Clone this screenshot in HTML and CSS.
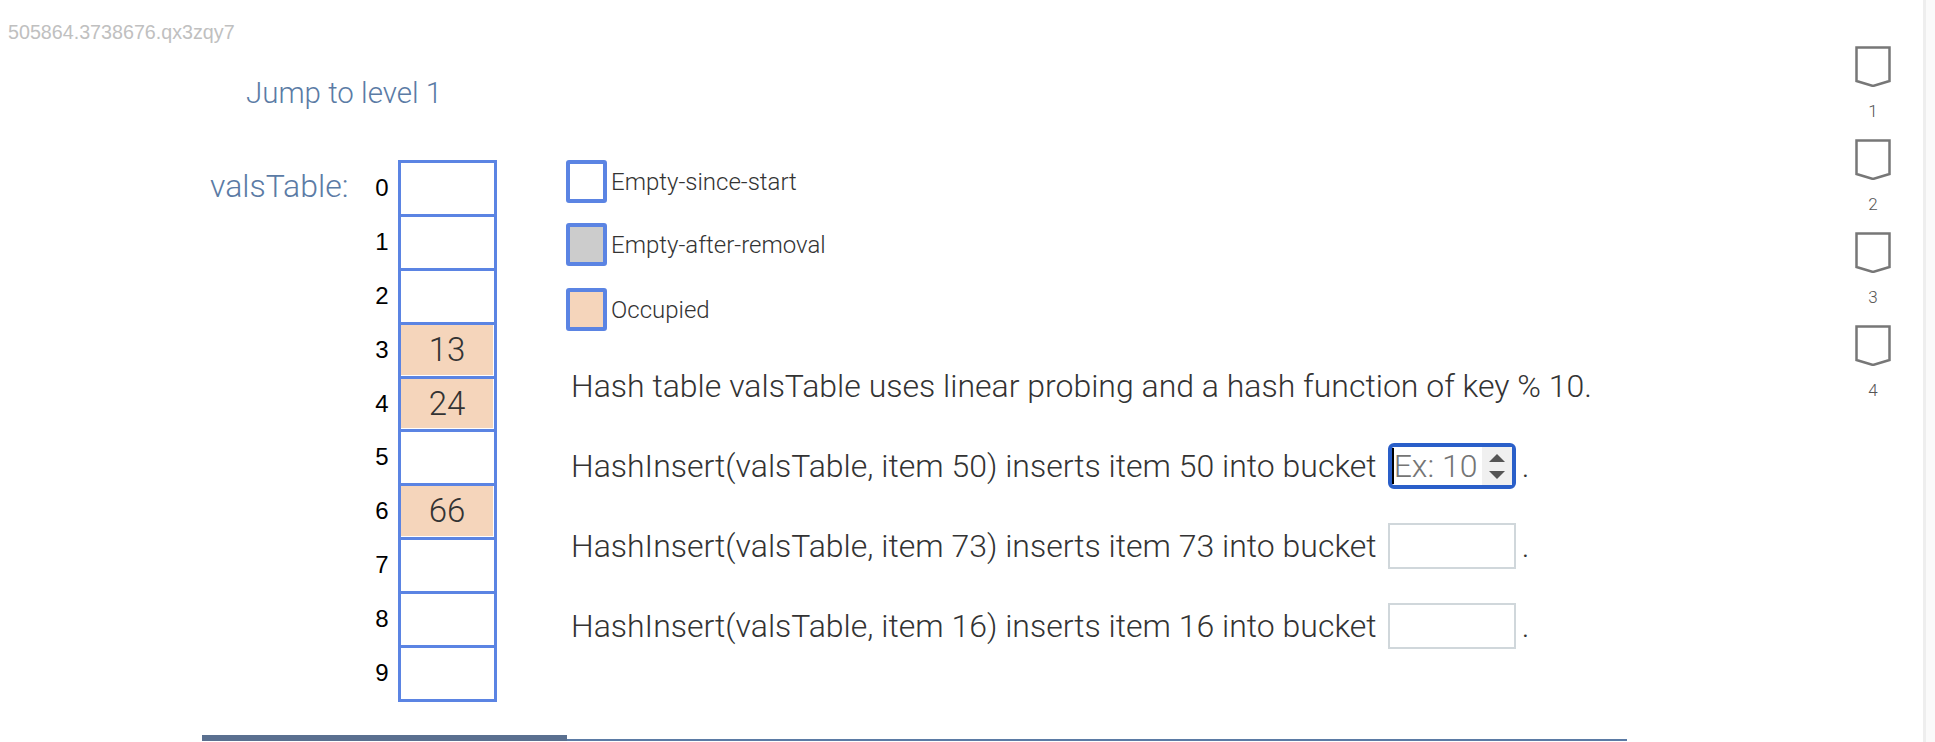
FILE: index.html
```html
<!DOCTYPE html>
<html lang="en">
<head>
  <meta charset="UTF-8">
  <title>Hash table linear probing</title>
  <meta name="viewport" content="width=device-width, initial-scale=1.0">
  <link rel="stylesheet" href="styles.css">
</head>
<body>
  <div class="main">
    <div class="watermark">505864.3738676.qx3zqy7</div>
    <div class="jump">Jump to level 1</div>

    <div class="activity">
      <div class="table-name">valsTable:</div>

      <div class="table">
        <div class="row"><div class="index">0</div><div class="cell"></div></div>
        <div class="row"><div class="index">1</div><div class="cell"></div></div>
        <div class="row"><div class="index">2</div><div class="cell"></div></div>
        <div class="row"><div class="index">3</div><div class="cell"><div class="filled">13</div></div></div>
        <div class="row"><div class="index">4</div><div class="cell"><div class="filled">24</div></div></div>
        <div class="row"><div class="index">5</div><div class="cell"></div></div>
        <div class="row"><div class="index">6</div><div class="cell"><div class="filled">66</div></div></div>
        <div class="row"><div class="index">7</div><div class="cell"></div></div>
        <div class="row"><div class="index">8</div><div class="cell"></div></div>
        <div class="row"><div class="index">9</div><div class="cell"></div></div>
      </div>

      <div class="content">
        <div class="legend">
          <div class="legend-row"><div class="swatch"></div><span>Empty-since-start</span></div>
          <div class="legend-row"><div class="swatch removed"></div><span>Empty-after-removal</span></div>
          <div class="legend-row"><div class="swatch occupied"></div><span>Occupied</span></div>
        </div>

        <div class="question">
          <div class="line">Hash table valsTable uses linear probing and a hash function of key % 10.</div>
          <div class="line">
            <span>HashInsert(valsTable, item 50) inserts item 50 into bucket</span>
            <div class="field focused">
              <div class="caret"></div>
              <input class="answer" type="text" placeholder="Ex: 10">
              <div class="spin">
                <svg width="16" height="28" viewBox="0 0 16 28"><path d="M8 2 L16 10 L0 10 Z M0 19 L16 19 L8 27 Z" fill="#555"/></svg>
              </div>
            </div>
            <span class="dot">.</span>
          </div>
          <div class="line">
            <span>HashInsert(valsTable, item 73) inserts item 73 into bucket</span>
            <div class="field"><input class="answer" type="text"></div>
            <span class="dot">.</span>
          </div>
          <div class="line">
            <span>HashInsert(valsTable, item 16) inserts item 16 into bucket</span>
            <div class="field"><input class="answer" type="text"></div>
            <span class="dot">.</span>
          </div>
        </div>
      </div>
    </div>

    <div class="progress"><div class="progress-done"></div></div>
  </div>

  <div class="rail">
    <div class="level">
      <svg class="shield" width="36" height="41" viewBox="0 0 36 41"><path d="M1.5 1.5 H34.5 V35 L18 40 L1.5 35 Z"/></svg>
      <div class="level-num">1</div>
    </div>
    <div class="level">
      <svg class="shield" width="36" height="41" viewBox="0 0 36 41"><path d="M1.5 1.5 H34.5 V35 L18 40 L1.5 35 Z"/></svg>
      <div class="level-num">2</div>
    </div>
    <div class="level">
      <svg class="shield" width="36" height="41" viewBox="0 0 36 41"><path d="M1.5 1.5 H34.5 V35 L18 40 L1.5 35 Z"/></svg>
      <div class="level-num">3</div>
    </div>
    <div class="level">
      <svg class="shield" width="36" height="41" viewBox="0 0 36 41"><path d="M1.5 1.5 H34.5 V35 L18 40 L1.5 35 Z"/></svg>
      <div class="level-num">4</div>
    </div>
  </div>

  <div class="scrollbar"></div>
</body>
</html>
```

FILE: styles.css
```css
body {
  margin: 0;
  height: 742px;
  overflow: hidden;
  display: flex;
  background-color: #fff;
  color: #333;
  font-family: Roboto, "Liberation Sans", sans-serif;
  font-weight: 300;
}

.main {
  flex: 1;
}

.watermark {
  padding: 20px 0 0 8px;
  height: 24px;
  line-height: 24px;
  font-family: "Liberation Sans", sans-serif;
  font-weight: 400;
  font-size: 19.7px;
  color: #c0c0c0;
}

.jump {
  margin: 29px 0 0 246px;
  height: 40px;
  line-height: 40px;
  font-size: 29.5px;
  color: #5b7ba5;
}

.activity {
  display: flex;
  width: 1425px;
  margin: 47px 0 0 202px;
}

.table-name {
  width: 164px;
  box-sizing: border-box;
  padding: 1px 0 0 8px;
  height: 50px;
  line-height: 50px;
  font-size: 32px;
  color: #5b7ba5;
}

.table {
  padding-bottom: 3px;
}

.row {
  display: flex;
  height: 53.9px;
}

.index {
  width: 32px;
  padding-top: 4px;
  line-height: 48px;
  box-sizing: border-box;
  text-align: center;
  font-family: "Liberation Sans", sans-serif;
  font-weight: 400;
  font-size: 24px;
  color: #000;
}

.cell {
  width: 99px;
  height: 56.9px;
  box-sizing: border-box;
  border: 3px solid #5b84e3;
  padding: 0 1px 1px 0;
}

.filled {
  height: 100%;
  line-height: 50px;
  text-align: center;
  font-size: 33px;
  background-color: #f5d5bb;
}

.content {
  margin-left: 69px;
}

.legend-row {
  display: flex;
  align-items: center;
  gap: 4px;
  margin-bottom: 20px;
  font-size: 24px;
}

.legend-row:last-child {
  margin-top: 22px;
  margin-bottom: 0;
}

.swatch {
  width: 41px;
  height: 43px;
  box-sizing: border-box;
  border: 4px solid #5b84e3;
  border-radius: 3px;
}

.removed {
  background-color: #ccc;
}

.occupied {
  background-color: #f5d5bb;
}

.question {
  margin: 32px 0 0 5px;
  display: flex;
  flex-direction: column;
  gap: 34px;
}

.line {
  display: flex;
  align-items: center;
  height: 46px;
  font-size: 32px;
  white-space: nowrap;
}

.field {
  display: flex;
  align-items: stretch;
  width: 128px;
  height: 46px;
  margin-left: 11px;
  box-sizing: border-box;
  border: 2px solid #d0d7db;
}

.field.focused {
  border: 4px solid #2a5fc9;
  border-radius: 6px;
}

.caret {
  width: 2px;
  margin: 1px 0;
  background-color: #000;
}

.answer {
  flex: 1;
  min-width: 0;
  border: none;
  outline: none;
  padding: 0;
  background: none;
  font-family: inherit;
  font-weight: 300;
  font-size: 32px;
  color: #333;
}

.answer::placeholder {
  color: #757575;
  opacity: 1;
}

.spin {
  width: 30px;
  flex: none;
  display: flex;
  align-items: center;
  justify-content: center;
  background-color: #f0f0f0;
}

.dot {
  margin-left: 6px;
}

.progress {
  display: flex;
  align-items: flex-end;
  width: 1425px;
  height: 6px;
  margin: 33px 0 0 202px;
  background: linear-gradient(#5b7ba5, #5b7ba5) bottom / 100% 2px no-repeat;
}

.progress-done {
  width: 365px;
  height: 6px;
  background-color: #5a7090;
}

.rail {
  width: 100px;
  padding-top: 46px;
}

.level {
  display: flex;
  flex-direction: column;
  align-items: center;
  height: 93px;
}

.shield path {
  fill: #fff;
  stroke: #777;
  stroke-width: 2.5;
}

.level-num {
  margin-top: 12px;
  line-height: 24px;
  font-size: 17px;
  color: #555;
}

.scrollbar {
  width: 12px;
  background-color: #fafafa;
  border-left: 3px solid #eee;
  box-sizing: border-box;
}
```
